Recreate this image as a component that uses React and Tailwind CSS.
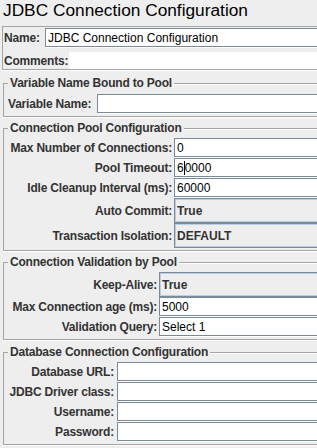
import React from "react";

const LBL = "font-bold text-[12px] tracking-[-0.2px] text-[#333333] whitespace-nowrap";

function TextField({ children }) {
  return (
    <div className="flex-1 h-[19px] mb-[1px] bg-white border border-[#7a8a99] shadow-[1px_1px_0_#ffffff] flex items-center pl-[2px] text-[12px] text-black whitespace-nowrap overflow-hidden">
      {children}
    </div>
  );
}

function Combo({ children }) {
  return (
    <div className="flex-1 h-[25px] bg-[#eeeeee] border border-[#7a8a99] shadow-[inset_1px_1px_0_#b8cfe5,inset_0_-1px_0_#b8cfe5] flex items-center pl-[2px] font-bold text-[12px] text-[#333333] whitespace-nowrap">
      {children}
    </div>
  );
}

function Row({ label, w, pr = "pr-[2px]", children }) {
  return (
    <div className="flex h-[20px]">
      <div className={`${w} ${pr} h-[19px] flex justify-end items-center ${LBL}`}>{label}</div>
      <TextField>{children}</TextField>
    </div>
  );
}

function ComboRow({ label, w, children }) {
  return (
    <div className="flex h-[25px]">
      <div className={`${w} pr-[2px] h-[25px] flex justify-end items-center ${LBL}`}>{label}</div>
      <Combo>{children}</Combo>
    </div>
  );
}

function Titled({ title, mt, pt = "pt-[2px]", children }) {
  return (
    <div className={`ml-[3px] ${mt}`}>
      <div className="flex h-[15px]">
        <div className="w-[5px] h-[8px] self-end border-l border-t border-[#a5a5a5]" />
        <div className={`px-[2px] h-[15px] leading-[15px] ${LBL}`}>{title}</div>
        <div className="flex-1 h-[8px] self-end border-t border-[#a5a5a5] shadow-[inset_0_1px_0_#ffffff]" />
      </div>
      <div className={`border-l border-b border-[#a5a5a5] shadow-[0_1px_0_#ffffff] ${pt} pb-[2px]`}>
        {children}
      </div>
    </div>
  );
}

export default function App() {
  return (
    <div className="w-[317px] h-[448px] overflow-hidden bg-[#eeeeee] font-['Liberation_Sans',Arial,sans-serif]">
      <div className="w-[380px]">
        <div className="h-[26px] pl-[3px] text-[17.3px] leading-[20px] text-black whitespace-nowrap">
          JDBC Connection Configuration
        </div>

        <div className="ml-[2px] border-l border-t border-b border-[#a5a5a5] shadow-[0_1px_0_#ffffff] pt-[1px]">
          <div className="flex h-[20px]">
            <div className={`w-[42px] pl-[1px] h-[19px] flex items-center ${LBL}`}>Name:</div>
            <TextField>JDBC Connection Configuration</TextField>
          </div>
          <div className="flex h-[17px] mt-[4px]">
            <div className={`w-[66px] pl-[1px] h-[17px] flex items-center ${LBL}`}>Comments:</div>
            <div className="flex-1 bg-white" />
          </div>
        </div>

        <Titled title="Variable Name Bound to Pool" mt="mt-[6px]" pt="pt-[3px]">
          <div className="flex h-[20px]">
            <div className={`w-[93px] pl-[4px] h-[19px] flex items-center ${LBL}`}>Variable Name:</div>
            <TextField></TextField>
          </div>
        </Titled>

        <Titled title="Connection Pool Configuration" mt="mt-[4px]">
          <Row label="Max Number of Connections:" w="w-[170px]">0</Row>
          <Row label="Pool Timeout:" w="w-[170px]">
            6<span className="inline-block w-px h-[14px] bg-black" />0000
          </Row>
          <Row label="Idle Cleanup Interval (ms):" w="w-[170px]">60000</Row>
          <ComboRow label="Auto Commit:" w="w-[170px]">True</ComboRow>
          <ComboRow label="Transaction Isolation:" w="w-[170px]">DEFAULT</ComboRow>
        </Titled>

        <Titled title="Connection Validation by Pool" mt="mt-[4px]">
          <ComboRow label="Keep-Alive:" w="w-[155px]">True</ComboRow>
          <Row label="Max Connection age (ms):" w="w-[155px]">5000</Row>
          <Row label="Validation Query:" w="w-[155px]">Select 1</Row>
        </Titled>

        <Titled title="Database Connection Configuration" mt="mt-[5px]">
          <Row label="Database URL:" w="w-[113px]" pr="pr-[3px]"></Row>
          <Row label="JDBC Driver class:" w="w-[113px]" pr="pr-[3px]"></Row>
          <Row label="Username:" w="w-[113px]" pr="pr-[3px]"></Row>
          <Row label="Password:" w="w-[113px]" pr="pr-[3px]"></Row>
        </Titled>
      </div>
    </div>
  );
}
